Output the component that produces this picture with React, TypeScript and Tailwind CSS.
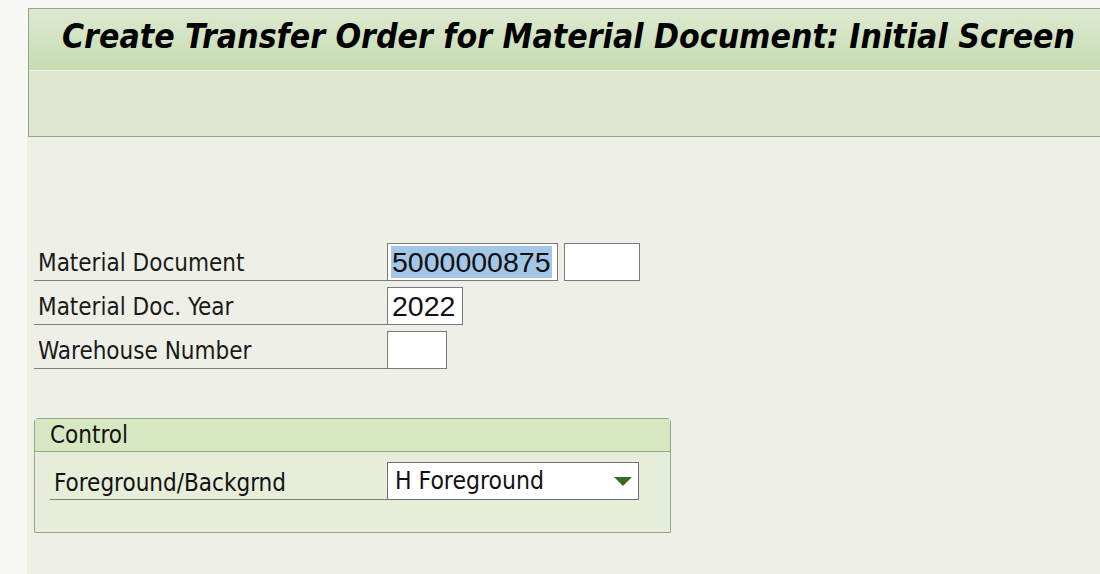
import React from "react";

const labelFont = { fontFamily: '"DejaVu Sans Condensed", "DejaVu Sans", sans-serif' };
const valueFont = { fontFamily: '"Liberation Sans", Arial, sans-serif' };

function FieldRow({ label, children }: { label: string; children: React.ReactNode }) {
  return (
    <div className="flex h-[44px] items-end">
      <div className="flex h-full w-[353px] items-end border-b border-[#7d7f7a] pb-[3px] pl-[4px] text-[24px] leading-none text-[#1a1a1a]">
        <span className="pb-[2px]">{label}</span>
      </div>
      {children}
    </div>
  );
}

export default function App() {
  return (
    <div className="flex h-[574px] w-[1100px] flex-col overflow-hidden bg-[#f7f8f4] pt-[8px] pl-[28px]" style={labelFont}>
      {/* title bar + empty toolbar */}
      <div className="flex h-[129px] flex-col border border-r-0 border-[#94a38c]">
        <div className="flex h-[62px] items-center border-b border-[#eef4e6] bg-gradient-to-b from-[#dde9d0] to-[#c6dcb2] pb-[6px] pl-[33px]">
          <h1 className="text-[33.5px] font-bold italic leading-none text-black">
            Create Transfer Order for Material Document: Initial Screen
          </h1>
        </div>
        <div className="flex-1 bg-[#dfe6d0]" />
      </div>

      {/* selection screen */}
      <div className="-ml-[1px] flex-1 bg-[#eef0e7] pl-[7px] pt-[100px]">
        <FieldRow label="Material Document">
          <div className="flex items-end gap-[6px]">
            <div className="flex h-[38px] w-[171px] items-center border border-[#7a7a7a] bg-white px-[3px]">
              <span className="bg-[#a4c7e7] px-[1px] text-[28.5px] leading-[32px] text-[#111]" style={valueFont}>
                5000000875
              </span>
            </div>
            <div className="h-[38px] w-[76px] border border-[#7a7a7a] bg-white" />
          </div>
        </FieldRow>
        <FieldRow label="Material Doc. Year">
          <div className="flex h-[38px] w-[76px] items-center border border-[#7a7a7a] bg-white px-[4px] text-[28.5px] leading-none text-[#111]" style={valueFont}>
            2022
          </div>
        </FieldRow>
        <FieldRow label="Warehouse Number">
          <div className="h-[38px] w-[60px] border border-[#7a7a7a] bg-white" />
        </FieldRow>

        {/* Control group box */}
        <div className="mt-[49px] flex h-[115px] w-[637px] flex-col rounded-t-[4px] border border-[#93a689] bg-[#e6edd9]">
          <div className="flex h-[33px] items-center border-b border-[#93a689] bg-[#d7e7c2] pl-[15px] text-[24px] leading-none text-[#111]">
            Control
          </div>
          <div className="flex h-[48px] items-end pl-[15px]">
            <div className="flex h-full w-[337px] items-end border-b border-[#7d7f7a] pb-[4px] pl-[4px] text-[24px] leading-none text-[#111]">
              Foreground/Backgrnd
            </div>
            <div className="flex h-[38px] w-[252px] items-center justify-between border border-[#6f6f6f] bg-white pl-[7px] pr-[6px] text-[24.5px] leading-none text-[#111]">
              <span>H Foreground</span>
              <svg width="18" height="9" viewBox="0 0 18 9">
                <path d="M0 0h18L9 9z" fill="#3b6a24" />
              </svg>
            </div>
          </div>
        </div>
      </div>
    </div>
  );
}
